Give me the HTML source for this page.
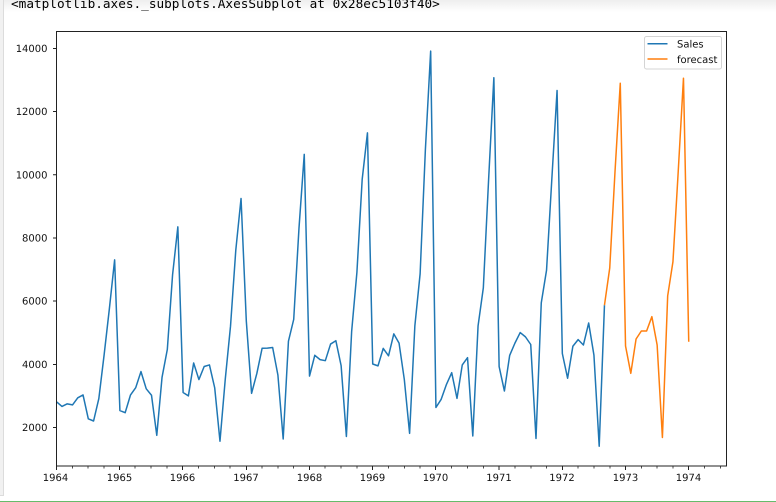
<!DOCTYPE html>
<html>
<head>
<meta charset="utf-8">
<style>
html,body{margin:0;padding:0;background:#fff;width:776px;height:502px;overflow:hidden}
body{position:relative}
#strip{position:absolute;left:0;top:0;width:3px;height:495px;background:#f1f1f1;border-right:1px solid #dcdcdc;border-bottom:1px solid #dcdcdc}
#shade{position:absolute;left:4px;right:0;top:0;height:12px;background:linear-gradient(#eeeeee,#ffffff)}
#code{position:absolute;left:11px;top:-4px;font:12.72px/15px "DejaVu Sans Mono","Liberation Mono",monospace;color:#000;white-space:pre}
#green{position:absolute;left:0;right:0;top:501px;height:1px;background:#66bb6a}
svg{position:absolute;left:0;top:0}
text{font-family:"DejaVu Sans",sans-serif;font-size:10px;fill:#111;text-rendering:geometricPrecision}
</style>
</head>
<body>
<div id="shade"></div>
<div id="strip"></div>
<div id="code">&lt;matplotlib.axes._subplots.AxesSubplot at 0x28ec5103f40&gt;</div>
<svg width="776" height="502" viewBox="0 0 776 502">
<g fill="none" stroke-width="1.5" stroke-linejoin="round">
<polyline vector-effect="non-scaling-stroke" stroke="#1f77b4" transform="matrix(5.267 0 0 -0.0316 56.7 490.9)" points="0,2815 1,2672 2,2755 3,2721 4,2946 5,3036 6,2282 7,2212 8,2922 9,4301 10,5764 11,7312 12,2541 13,2475 14,3031 15,3266 16,3776 17,3230 18,3028 19,1759 20,3595 21,4474 22,6838 23,8357 24,3113 25,3006 26,4047 27,3523 28,3937 29,3986 30,3260 31,1573 32,3528 33,5211 34,7614 35,9254 36,5375 37,3088 38,3718 39,4514 40,4520 41,4539 42,3663 43,1643 44,4739 45,5428 46,8314 47,10651 48,3633 49,4292 50,4154 51,4121 52,4647 53,4753 54,3965 55,1723 56,5048 57,6922 58,9858 59,11331 60,4016 61,3957 62,4510 63,4276 64,4968 65,4677 66,3523 67,1821 68,5222 69,6872 70,10803 71,13916 72,2639 73,2899 74,3370 75,3740 76,2927 77,3986 78,4217 79,1738 80,5221 81,6424 82,9842 83,13076 84,3934 85,3162 86,4286 87,4676 88,5010 89,4874 90,4633 91,1659 92,5951 93,6981 94,9851 95,12670 96,4348 97,3564 98,4577 99,4788 100,4618 101,5312 102,4298 103,1413 104,5877"/>
<polyline vector-effect="non-scaling-stroke" stroke="#ff7f0e" transform="matrix(5.267 0 0 -0.0316 56.7 490.9)" points="104,5877 105,7054 106,10100 107,12900 108,4585 109,3721 110,4807 111,5060 112,5060 113,5513 114,4617 115,1690 116,6170 117,7250 118,10100 119,13060 120,4720"/>
</g>
<g stroke="#222" stroke-width="1" fill="none">
<rect x="56.5" y="31.5" width="670" height="434.5"/>
<path d="M53 48.5h3.5M53 111.5h3.5M53 174.7h3.5M53 238h3.5M53 301h3.5M53 364.5h3.5M53 427.5h3.5"/>
<path d="M56.5 466v4M119.5 466v4M182.5 466v4M246.5 466v4M309.5 466v4M372.5 466v4M435.5 466v4M499 466v4M562.5 466v4M625.5 466v4M688.5 466v4"/>
<path stroke-width="0.8" d="M72.5 466v2.5M88 466v2.5M104 466v2.5M135 466v2.5M151 466v2.5M167 466v2.5M198.5 466v2.5M214.5 466v2.5M230 466v2.5M262 466v2.5M278 466v2.5M293.5 466v2.5M325 466v2.5M341 466v2.5M357 466v2.5M388.5 466v2.5M404.5 466v2.5M420 466v2.5M451.5 466v2.5M467.5 466v2.5M483.5 466v2.5M515 466v2.5M531 466v2.5M546.5 466v2.5M578 466v2.5M594 466v2.5M610 466v2.5M641.5 466v2.5M657 466v2.5M673 466v2.5M704.5 466v2.5M720.5 466v2.5"/>
</g>
<g text-anchor="end">
<text x="47.5" y="52">14000</text>
<text x="47.5" y="115">12000</text>
<text x="47.5" y="178.3">10000</text>
<text x="47.5" y="241.5">8000</text>
<text x="47.5" y="304.7">6000</text>
<text x="47.5" y="368">4000</text>
<text x="47.5" y="431">2000</text>
</g>
<g text-anchor="middle">
<text x="55.5" y="481">1964</text>
<text x="119.5" y="481">1965</text>
<text x="182.5" y="481">1966</text>
<text x="246" y="481">1967</text>
<text x="309.5" y="481">1968</text>
<text x="372.5" y="481">1969</text>
<text x="435.5" y="481">1970</text>
<text x="499" y="481">1971</text>
<text x="562" y="481">1972</text>
<text x="625.5" y="481">1973</text>
<text x="688.5" y="481">1974</text>
</g>
<rect x="644.5" y="36.5" width="77" height="32.5" rx="2" fill="#fff" fill-opacity="0.8" stroke="#d4d4d4"/>
<path d="M647.5 43.7h20" stroke="#1f77b4" stroke-width="1.5" fill="none"/>
<path d="M647.5 59h20" stroke="#ff7f0e" stroke-width="1.5" fill="none"/>
<text x="677" y="47.5">Sales</text>
<text x="677" y="63">forecast</text>
</svg>
<div id="green"></div>
</body>
</html>
